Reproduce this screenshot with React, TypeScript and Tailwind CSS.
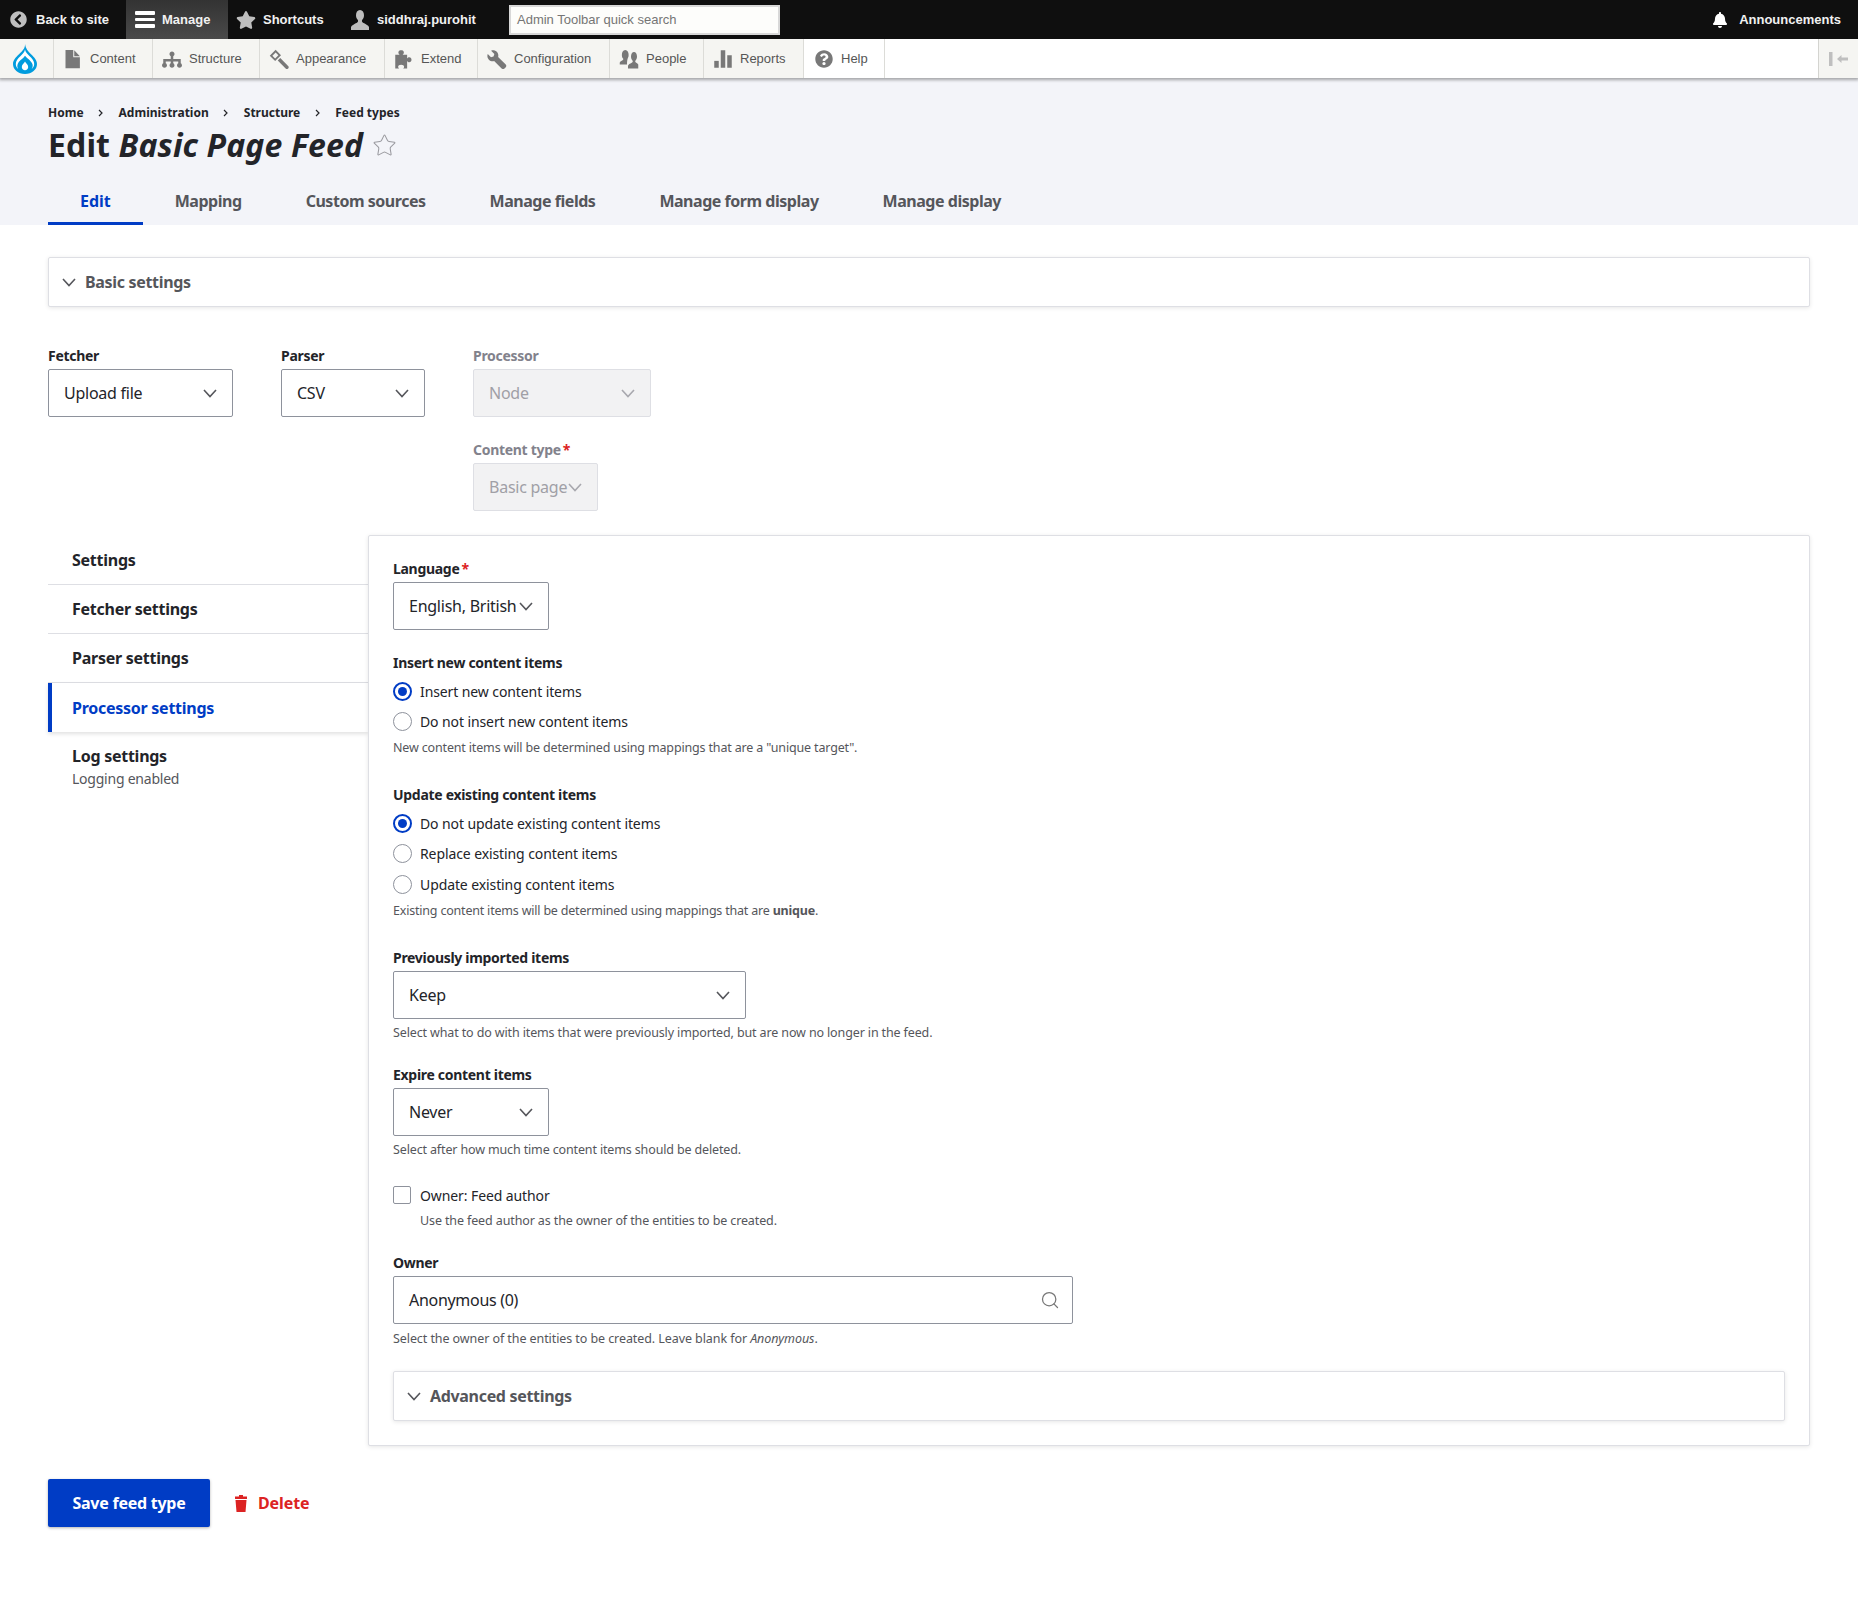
import { Search, Star } from 'lucide-react';
import { FaBell, FaChevronCircleLeft, FaQuestionCircle, FaStar } from 'react-icons/fa';
import type { ReactNode } from 'react';

function Chevron({ className = 'w-[14px] h-[9px] text-[#55565b]' }: { className?: string }) {
  return (
    <svg viewBox="0 0 14 9" className={`${className} shrink-0`} fill="none" stroke="currentColor" strokeWidth="1.600">
      <path d="M1 1l6 6.500L13 1" />
    </svg>
  );
}

function LogoIcon() {
  return (
    <svg viewBox="0 0 24 30" className="w-[24px] h-[30px]">
      <path
        fill="#009cde"
        d="M12 0c.3 4.600-2.800 7-6 10.200C3 13.200 0 16 0 20c0 5.500 5 10 12 10s12-4.500 12-10c0-4-3-6.800-6-9.800C15 7.200 12.500 4.600 12 0z"
      />
      <path
        fill="#fff"
        d="M12 5.500c-.4 2.500-2 4-4.400 6.400C5 14.400 2.800 16.800 2.800 20c0 2 .9 3.800 2.400 5.100-.6-1-.9-2.100-.9-3.100 0-3 2.400-5 4.300-6.700 1.200-1 2.500-2.200 3.400-3.600 1 1.300 3 2.900 4.700 4.600 1.900 1.900 3 3.500 3 5.500 0 1.200-.4 2.400-1.100 3.300 1.600-1.300 2.600-3.100 2.600-5.100 0-3.200-2.200-5.600-4.800-8.100C14 9.500 12.400 8 12 5.500z"
      />
      <path fill="#fff" d="M12 17.500c-.8 1.600-3.200 3-3.200 5.600 0 1.800 1.400 3.200 3.200 3.200s3.200-1.400 3.200-3.200c0-2.600-2.400-4-3.200-5.600z" />
    </svg>
  );
}

const trayIcons: Record<string, ReactNode> = {
  Content: <path d="M13.500 5.700H9V1zM8.200 6.500V.7H2v14.600h11.500V6.500z" />,
  Structure: (
    <path d="M15 11.300V8H9V5.700c.6-.3 1-1 1-1.700 0-1.100-.9-2-2-2s-2 .9-2 2c0 .7.4 1.400 1 1.700V8H1v3.300c-.6.3-1 1-1 1.700 0 1.100.9 2 2 2s2-.9 2-2c0-.7-.4-1.400-1-1.700V10h4v1.300c-.6.3-1 1-1 1.700 0 1.100.9 2 2 2s2-.9 2-2c0-.7-.4-1.400-1-1.700V10h4v1.300c-.6.3-1 1-1 1.700 0 1.100.9 2 2 2s2-.9 2-2c0-.7-.4-1.400-1-1.700z" />
  ),
  Appearance: (
    <>
      <path fillRule="evenodd" d="M5.300.6L.6 5.300l4.300 4.300 4.700-4.700zM5.300 2.800l2.200 2.200-2.600 2.600-2.200-2.200z" />
      <path d="M9 7.200l-2 2 6.300 6.300c.6.600 1.400.6 2 0 .6-.6.6-1.400 0-2z" />
    </>
  ),
  Extend: (
    <path d="M1 4.500h3.500c-.6-.5-1-1-1-1.700C3.500 1.500 4.500 1 5.700 1s2.200.5 2.200 1.800c0 .7-.4 1.200-1 1.700h3.600v3c.5-.6 1-1 1.700-1 1.100 0 1.800.9 1.800 2s-.7 2-1.800 2c-.7 0-1.200-.4-1.700-1v6H7.300c.5-.4.800-.9.800-1.400 0-1-1-1.600-2.400-1.600s-2.400.6-2.400 1.600c0 .5.3 1 .8 1.400H1z" />
  ),
  Configuration: (
    <path d="M15 12.300L8.900 6.400c.4-1.500 0-3.100-1.100-4.200C6.600 1 4.800.7 3.300 1.300l2.600 2.600-.7 2-2 .7L.6 4c-.6 1.500-.3 3.300.9 4.500 1.100 1.100 2.700 1.500 4.200 1.100l6 6c.6.6 1.700.6 2.300 0l1-1c.6-.6.6-1.700 0-2.300z" />
  ),
  People: (
    <>
      <path d="M6.400 12.300H.6v-1.400c.1-.9.900-1.300 2-1.800.7-.3.900-.7.800-1.300-.8-.7-1.100-1.900-1.100-3.100 0-2.200.9-3.900 2.700-3.900s2.700 1.700 2.700 3.900c0 .9-.2 1.800-.6 2.500-.5 1.200-.7 3.200-.7 5.100z" />
      <path d="M15.400 15.500H7.200v-2.100c.2-1.200 1.600-1.800 3-2.500.9-.4.900-1 .7-1.600-.9-.9-1.300-2-1.300-3.400 0-2 1-3.500 2.400-3.500s2.400 1.500 2.400 3.500c0 1.400-.4 2.500-1.300 3.400-.2.600-.2 1.200.7 1.600 1 .5 1.400 1 1.600 1.500z" />
    </>
  ),
  Reports: (
    <>
      <rect x="1" y="9.500" width="3.600" height="5.500" />
      <rect x="6.200" y="1" width="3.600" height="14" />
      <rect x="11.400" y="5" width="3.600" height="10" />
    </>
  ),
};

function TrayItem({ label, w }: { label: string; w: string }) {
  return (
    <div className={`${w} h-full flex items-center pl-[9px] gap-[7px] border-r border-[#dcdcd8] text-[#565656]`}>
      <svg viewBox="0 0 16 16" className="w-[20px] h-[20px] shrink-0" fill="#787878">
        {trayIcons[label]}
      </svg>
      <span>{label}</span>
    </div>
  );
}

function Toolbar() {
  return (
    <header className="relative z-10 shadow-[0_1px_3px_1px_rgba(0,0,0,0.33)] font-['Liberation_Sans',sans-serif] text-[13px]">
      <div className="h-[39px] bg-[#0f0f0f] flex items-center text-[#f1f1f1] font-bold">
        <div className="flex items-center w-[126px] pl-[10px] gap-[9px]">
          <FaChevronCircleLeft className="w-[17px] h-[17px] text-[#bebebe]" />
          <span>Back to site</span>
        </div>
        <div className="flex items-center w-[102px] h-full pl-[9px] gap-[7px] bg-gradient-to-b from-[#333] to-[#4a4a4a]">
          <div className="flex flex-col gap-[3px] w-[20px]">
            <span className="h-[3.500px] rounded-[1px] bg-white" />
            <span className="h-[3.500px] rounded-[1px] bg-white" />
            <span className="h-[3.500px] rounded-[1px] bg-white" />
          </div>
          <span>Manage</span>
        </div>
        <div className="flex items-center w-[122px] pl-[8px] gap-[7px]">
          <FaStar className="w-[20px] h-[20px] text-[#bebebe]" />
          <span>Shortcuts</span>
        </div>
        <div className="flex items-center w-[159px] gap-[7px]">
          <svg viewBox="0 0 20 20" className="w-[20px] h-[20px]" fill="#bebebe">
            <path d="M10 0c-2.600 0-4 2.300-4 5.200 0 2 .7 3.600 1.900 4.800.3 1 .3 2-.9 2.700-2.100 1-5.500 2.600-6 4.300V20h18v-3c-.5-1.700-3.900-3.300-6-4.300-1.200-.7-1.200-1.700-.9-2.700C13.300 8.800 14 7.200 14 5.200 14 2.300 12.600 0 10 0z" />
          </svg>
          <span>siddhraj.purohit</span>
        </div>
        <div className="w-[271px] h-[30px] bg-[#fdfdfb] border-2 border-[#d8d8d8] flex items-center pl-[6px] font-normal text-[#757575]">
          Admin Toolbar quick search
        </div>
        <div className="ml-auto flex items-center gap-[11px] pr-[17px]">
          <FaBell className="w-[16px] h-[16px] text-white" />
          <span>Announcements</span>
        </div>
      </div>
      <div className="h-[39px] bg-white flex items-center">
        <div className="w-[54px] h-full bg-[#f5f5f2] flex items-center pl-[13px] border-r border-[#dcdcd8]">
          <LogoIcon />
        </div>
        <div className="flex h-full bg-[#f5f5f2]">
          <TrayItem label="Content" w="w-[99px]" />
          <TrayItem label="Structure" w="w-[107px]" />
          <TrayItem label="Appearance" w="w-[125px]" />
          <TrayItem label="Extend" w="w-[93px]" />
          <TrayItem label="Configuration" w="w-[132px]" />
          <TrayItem label="People" w="w-[94px]" />
          <TrayItem label="Reports" w="w-[100px]" />
        </div>
        <div className="w-[81px] h-full flex items-center pl-[11px] gap-[8px] border-r border-[#dcdcd8] text-[#565656]">
          <FaQuestionCircle className="w-[18px] h-[18px] text-[#787878]" />
          <span>Help</span>
        </div>
        <div className="ml-auto w-[40px] h-full bg-[#f5f5f2] border-l border-[#d4d4d0] flex items-center pl-[10px]">
          <svg viewBox="0 0 20 16" className="w-[20px] h-[16px]" fill="#bfbfbf">
            <rect x="0" y="1" width="3.500" height="14" />
            <path d="M8 8l4.500-4v2.500H19v3h-6.500V12z" />
          </svg>
        </div>
      </div>
    </header>
  );
}

function Crumb({ children }: { children: ReactNode }) {
  return <span className="font-bold text-[12px] text-[#232429]">{children}</span>;
}

function Sep() {
  return (
    <svg viewBox="0 0 6 8" className="w-[6px] h-[8px] mx-[14.500px]" fill="none" stroke="#232429" strokeWidth="1.200">
      <path d="M1 1l3 3-3 3" />
    </svg>
  );
}

const tabs = ['Edit', 'Mapping', 'Custom sources', 'Manage fields', 'Manage form display', 'Manage display'];

function PageHeader() {
  return (
    <div className="bg-[#f3f4f9] h-[147px] pl-[48px] pt-[26px]">
      <div className="flex items-center h-[18px]">
        <Crumb>Home</Crumb>
        <Sep />
        <Crumb>Administration</Crumb>
        <Sep />
        <Crumb>Structure</Crumb>
        <Sep />
        <Crumb>Feed types</Crumb>
      </div>
      <div className="flex items-center h-[40px] mt-[3px]">
        <h1 className="text-[32px] leading-[40px] font-bold text-[#232429] tracking-[0.12px]">
          Edit <em>Basic Page Feed</em>
        </h1>
        <Star className="w-[25px] h-[25px] ml-[9px] text-[#9a9aa0]" strokeWidth={1} />
      </div>
      <nav className="flex mt-[13px] h-[47px]">
        {tabs.map((t, i) => (
          <div
            key={t}
            className={
              i === 0
                ? 'px-[32px] pt-[2px] flex items-center border-b-[3px] border-[#003cc5] text-[#003cc5] font-bold text-[16px] tracking-[-0.02px]'
                : 'px-[32px] pt-[2px] flex items-center border-b-[3px] border-transparent text-[#55565b] font-bold text-[16px] tracking-[-0.47px]'
            }
          >
            {t}
          </div>
        ))}
      </nav>
    </div>
  );
}

function Label({ children, disabled, required }: { children: ReactNode; disabled?: boolean; required?: boolean }) {
  return (
    <div className={`h-[18px] leading-[18px] text-[14px] font-bold tracking-[-0.3px] ${disabled ? 'text-[#82828c]' : 'text-[#232429]'}`}>
      {children}
      {required && <span className="text-[#dc2323] ml-[2px]">*</span>}
    </div>
  );
}

function Select({ value, w, disabled }: { value: string; w: string; disabled?: boolean }) {
  return (
    <div
      className={
        disabled
          ? `${w} h-[48px] mt-[4px] rounded-[2px] border border-[#dedfe4] bg-[#f2f2f3] flex items-center justify-between px-[15px] whitespace-nowrap tracking-[-0.25px] text-[#a0a0a6] text-[16px]`
          : `${w} h-[48px] mt-[4px] rounded-[2px] border border-[#8e929c] bg-white flex items-center justify-between px-[15px] whitespace-nowrap tracking-[-0.25px] text-[#232429] text-[16px]`
      }
    >
      <span>{value}</span>
      <Chevron className={disabled ? 'w-[14px] h-[9px] text-[#a8a8ae]' : 'w-[14px] h-[9px] text-[#55565b]'} />
    </div>
  );
}

function Radio({ label, checked, className }: { label: string; checked?: boolean; className: string }) {
  return (
    <div className={`flex items-center h-[20px] gap-[8px] text-[14px] tracking-[-0.1px] text-[#232429] ${className}`}>
      {checked ? (
        <span className="w-[19px] h-[19px] rounded-full border-[2px] border-[#003cc5] flex items-center justify-center shrink-0">
          <span className="w-[9px] h-[9px] rounded-full bg-[#003cc5]" />
        </span>
      ) : (
        <span className="w-[19px] h-[19px] rounded-full border border-[#8e929c] shrink-0" />
      )}
      <span>{label}</span>
    </div>
  );
}

function Desc({ children, className = 'tracking-[-0.16px]' }: { children: ReactNode; className?: string }) {
  return <div className={`h-[18px] leading-[18px] text-[12.500px] text-[#55565b] ${className}`}>{children}</div>;
}

function Details({ title, className }: { title: string; className: string }) {
  return (
    <div className={`border border-[#dedfe4] bg-white rounded-[2px] shadow-[0_1px_4px_rgba(0,0,0,0.1)] flex items-center font-bold text-[16px] tracking-[-0.32px] text-[#55565b] ${className}`}>
      <Chevron />
      <span>{title}</span>
    </div>
  );
}

function SideTabs() {
  return (
    <div className="w-[320px] shrink-0 text-[16px] font-bold tracking-[-0.26px] text-[#232429]">
      <div className="h-[50px] pl-[24px] flex items-center border-b border-[#dedfe4]">Settings</div>
      <div className="h-[49px] pl-[24px] flex items-center border-b border-[#dedfe4]">Fetcher settings</div>
      <div className="h-[49px] pl-[24px] flex items-center border-b border-[#dedfe4]">Parser settings</div>
      <div className="h-[49px] pl-[20px] flex items-center border-l-4 border-[#003cc5] text-[#003cc5] shadow-[0_2px_4px_rgba(0,0,0,0.12)]">
        Processor settings
      </div>
      <div className="pl-[24px] pt-[12px]">
        <div className="leading-[24px]">Log settings</div>
        <div className="text-[14px] leading-[20px] mt-[1px] font-normal tracking-[-0.23px] text-[#55565b]">Logging enabled</div>
      </div>
    </div>
  );
}

function Panel() {
  return (
    <div className="flex-1 border border-[#dedfe4] rounded-[2px] bg-white shadow-[0_1px_4px_rgba(0,0,0,0.1)] px-[24px] pt-[24px] pb-[24px]">
      <Label required>Language</Label>
      <Select value="English, British" w="w-[156px]" />

      <div className="mt-[24px]">
        <Label>Insert new content items</Label>
      </div>
      <Radio label="Insert new content items" checked className="mt-[9px]" />
      <Radio label="Do not insert new content items" className="mt-[10px]" />
      <Desc className="mt-[8px] tracking-[-0.16px]">New content items will be determined using mappings that are a "unique target".</Desc>

      <div className="mt-[29px]">
        <Label>Update existing content items</Label>
      </div>
      <Radio label="Do not update existing content items" checked className="mt-[9px]" />
      <Radio label="Replace existing content items" className="mt-[10px]" />
      <Radio label="Update existing content items" className="mt-[11px]" />
      <Desc className="mt-[8px] tracking-[-0.2px]">
        Existing content items will be determined using mappings that are <strong>unique</strong>.
      </Desc>

      <div className="mt-[29px]">
        <Label>Previously imported items</Label>
      </div>
      <Select value="Keep" w="w-[353px]" />
      <Desc className="mt-[5px] tracking-[-0.13px]">Select what to do with items that were previously imported, but are now no longer in the feed.</Desc>

      <div className="mt-[24px]">
        <Label>Expire content items</Label>
      </div>
      <Select value="Never" w="w-[156px]" />
      <Desc className="mt-[5px] tracking-[-0.14px]">Select after how much time content items should be deleted.</Desc>

      <div className="flex items-center h-[20px] gap-[9px] mt-[26px] text-[14px] tracking-[-0.1px] text-[#232429]">
        <span className="w-[18px] h-[18px] rounded-[2px] border border-[#8e929c]" />
        <span>Owner: Feed author</span>
      </div>
      <Desc className="mt-[7px] pl-[27px] tracking-[-0.12px]">Use the feed author as the owner of the entities to be created.</Desc>

      <div className="mt-[24px]">
        <Label>Owner</Label>
      </div>
      <div className="w-[680px] h-[48px] mt-[4px] rounded-[2px] border border-[#8e929c] flex items-center justify-between pl-[15px] pr-[12px] text-[16px] tracking-[-0.3px] text-[#232429]">
        <span>Anonymous (0)</span>
        <Search className="w-[20px] h-[20px] text-[#777]" strokeWidth={1.500} />
      </div>
      <Desc className="mt-[6px] tracking-[-0.08px]">
        Select the owner of the entities to be created. Leave blank for <em>Anonymous</em>.
      </Desc>

      <Details title="Advanced settings" className="h-[50px] mt-[23px] pl-[13px] gap-[9px]" />
    </div>
  );
}

export default function App() {
  return (
    <div className="min-h-[1624px] bg-white font-['Noto_Sans',sans-serif]">
      <Toolbar />
      <PageHeader />
      <main className="px-[48px] pt-[32px]">
        <Details title="Basic settings" className="h-[50px] pl-[13px] gap-[9px]" />

        <div className="flex gap-[48px] mt-[40px]">
          <div>
            <Label>Fetcher</Label>
            <Select value="Upload file" w="w-[185px]" />
          </div>
          <div>
            <Label>Parser</Label>
            <Select value="CSV" w="w-[144px]" />
          </div>
          <div>
            <Label disabled>Processor</Label>
            <Select value="Node" w="w-[178px]" disabled />
            <div className="mt-[24px]">
              <Label disabled required>
                Content type
              </Label>
            </div>
            <Select value="Basic page" w="w-[125px]" disabled />
          </div>
        </div>

        <div className="flex mt-[24px]">
          <SideTabs />
          <Panel />
        </div>

        <div className="flex items-center mt-[33px]">
          <div className="w-[162px] h-[48px] bg-[#003cc5] rounded-[2px] shadow-[0_1px_3px_rgba(0,0,0,0.3)] flex items-center justify-center font-bold text-[16px] tracking-[-0.25px] text-white">
            Save feed type
          </div>
          <div className="flex items-center ml-[24px] gap-[10px] font-bold text-[16px] tracking-[-0.1px] text-[#dc2323]">
            <svg viewBox="0 0 14 17" className="w-[14px] h-[17px]" fill="#dc2323">
              <path d="M5 0h4v1.500h4V4H1V1.500h4zM1.500 5h11l-1 12h-9z" />
            </svg>
            <span>Delete</span>
          </div>
        </div>
      </main>
    </div>
  );
}
